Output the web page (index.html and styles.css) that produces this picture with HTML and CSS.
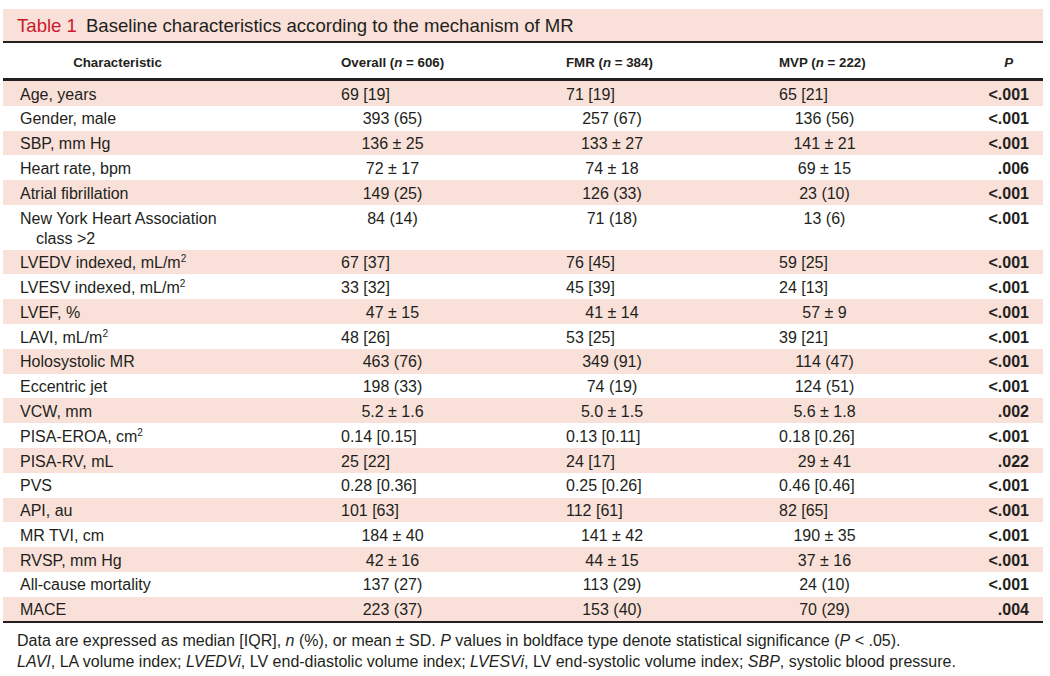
FILE: index.html
```html
<!DOCTYPE html>
<html lang="en">
<head>
<meta charset="utf-8">
<title>Table 1</title>
<link rel="stylesheet" href="styles.css">
</head>
<body>
<div class="page">
  <div class="caption"><span class="label">Table 1</span>Baseline characteristics according to the mechanism of MR</div>
  <div class="thead">
    <div class="h hc">Characteristic</div>
    <div class="h">Overall (<i>n</i> = 606)</div>
    <div class="h">FMR (<i>n</i> = 384)</div>
    <div class="h">MVP (<i>n</i> = 222)</div>
    <div class="h hp"><i>P</i></div>
  </div>
  <div class="tbody">
    <div class="row"><div class="k">Age, years</div><div class="o">69 [19]</div><div class="f">71 [19]</div><div class="m">65 [21]</div><div class="p">&lt;.001</div></div>
    <div class="row"><div class="k">Gender, male</div><div class="o c">393 (65)</div><div class="f c">257 (67)</div><div class="m c">136 (56)</div><div class="p">&lt;.001</div></div>
    <div class="row"><div class="k">SBP, mm Hg</div><div class="o c">136 ± 25</div><div class="f c">133 ± 27</div><div class="m c">141 ± 21</div><div class="p">&lt;.001</div></div>
    <div class="row"><div class="k">Heart rate, bpm</div><div class="o c">72 ± 17</div><div class="f c">74 ± 18</div><div class="m c">69 ± 15</div><div class="p">.006</div></div>
    <div class="row"><div class="k">Atrial fibrillation</div><div class="o c">149 (25)</div><div class="f c">126 (33)</div><div class="m c">23 (10)</div><div class="p">&lt;.001</div></div>
    <div class="row"><div class="k hang">New York Heart Association class &gt;2</div><div class="o c">84 (14)</div><div class="f c">71 (18)</div><div class="m c">13 (6)</div><div class="p">&lt;.001</div></div>
    <div class="row"><div class="k">LVEDV indexed, mL/m<sup>2</sup></div><div class="o">67 [37]</div><div class="f">76 [45]</div><div class="m">59 [25]</div><div class="p">&lt;.001</div></div>
    <div class="row"><div class="k">LVESV indexed, mL/m<sup>2</sup></div><div class="o">33 [32]</div><div class="f">45 [39]</div><div class="m">24 [13]</div><div class="p">&lt;.001</div></div>
    <div class="row"><div class="k">LVEF, %</div><div class="o c">47 ± 15</div><div class="f c">41 ± 14</div><div class="m c">57 ± 9</div><div class="p">&lt;.001</div></div>
    <div class="row"><div class="k">LAVI, mL/m<sup>2</sup></div><div class="o">48 [26]</div><div class="f">53 [25]</div><div class="m">39 [21]</div><div class="p">&lt;.001</div></div>
    <div class="row"><div class="k">Holosystolic MR</div><div class="o c">463 (76)</div><div class="f c">349 (91)</div><div class="m c">114 (47)</div><div class="p">&lt;.001</div></div>
    <div class="row"><div class="k">Eccentric jet</div><div class="o c">198 (33)</div><div class="f c">74 (19)</div><div class="m c">124 (51)</div><div class="p">&lt;.001</div></div>
    <div class="row"><div class="k">VCW, mm</div><div class="o c">5.2 ± 1.6</div><div class="f c">5.0 ± 1.5</div><div class="m c">5.6 ± 1.8</div><div class="p">.002</div></div>
    <div class="row"><div class="k">PISA-EROA, cm<sup>2</sup></div><div class="o">0.14 [0.15]</div><div class="f">0.13 [0.11]</div><div class="m">0.18 [0.26]</div><div class="p">&lt;.001</div></div>
    <div class="row"><div class="k">PISA-RV, mL</div><div class="o">25 [22]</div><div class="f">24 [17]</div><div class="m c">29 ± 41</div><div class="p">.022</div></div>
    <div class="row"><div class="k">PVS</div><div class="o">0.28 [0.36]</div><div class="f">0.25 [0.26]</div><div class="m">0.46 [0.46]</div><div class="p">&lt;.001</div></div>
    <div class="row"><div class="k">API, au</div><div class="o">101 [63]</div><div class="f">112 [61]</div><div class="m">82 [65]</div><div class="p">&lt;.001</div></div>
    <div class="row"><div class="k">MR TVI, cm</div><div class="o c">184 ± 40</div><div class="f c">141 ± 42</div><div class="m c">190 ± 35</div><div class="p">&lt;.001</div></div>
    <div class="row"><div class="k">RVSP, mm Hg</div><div class="o c">42 ± 16</div><div class="f c">44 ± 15</div><div class="m c">37 ± 16</div><div class="p">&lt;.001</div></div>
    <div class="row"><div class="k">All-cause mortality</div><div class="o c">137 (27)</div><div class="f c">113 (29)</div><div class="m c">24 (10)</div><div class="p">&lt;.001</div></div>
    <div class="row"><div class="k">MACE</div><div class="o c">223 (37)</div><div class="f c">153 (40)</div><div class="m c">70 (29)</div><div class="p">.004</div></div>
  </div>
  <div class="notes">
    <p>Data are expressed as median [IQR], <i>n</i> (%), or mean ± SD. <i>P</i> values in boldface type denote statistical significance (<i>P</i> &lt; .05).</p>
    <p><i>LAVI</i>, LA volume index; <i>LVEDVi</i>, LV end-diastolic volume index; <i>LVESVi</i>, LV end-systolic volume index; <i>SBP</i>, systolic blood pressure.</p>
  </div>
</div>
</body>
</html>
```
FILE: styles.css
```css
html, body {
  margin: 0;
  padding: 0;
  background: #ffffff;
}

body {
  font-family: "Liberation Sans", Arial, sans-serif;
  color: #231f20;
}

.page {
  width: 1040px;
  margin-left: 3px;
  padding-top: 9px;
}

.caption {
  background: #f9e1d9;
  height: 32px;
  line-height: 33px;
  font-size: 18.6px;
  padding-left: 14px;
  border-bottom: 2px solid #231f20;
}

.caption .label {
  color: #cc1a2c;
  margin-right: 9px;
}

.thead,
.row {
  display: grid;
  grid-template-columns: 338px 225px 213px 184px 80px;
}

.thead {
  height: 35px;
  align-items: center;
  font-size: 13.3px;
  font-weight: bold;
  border-bottom: 3px solid #231f20;
}

.thead .h {
  padding-top: 3px;
}

.thead .hc {
  text-align: center;
  padding-right: 109px;
}

.thead .hp {
  text-align: right;
  padding-right: 30px;
}

.tbody {
  border-bottom: 2.5px solid #231f20;
}

.row {
  font-size: 16px;
  line-height: 20px;
  padding: 3.6px 0 1.2px;
}

.row:nth-child(odd) {
  background: #f9e1d9;
}

.row .k {
  padding-left: 17px;
}

.row .k.hang {
  padding-left: 33px;
  text-indent: -16px;
  padding-right: 100px;
}

.row sup {
  font-size: 10px;
  line-height: 0;
  vertical-align: 6px;
}

.row .o.c {
  text-align: center;
  padding-right: 122px;
}

.row .f.c {
  text-align: center;
  padding-right: 121px;
}

.row .m.c {
  text-align: center;
  padding-right: 93px;
}

.row .p {
  text-align: right;
  font-weight: bold;
  padding-right: 14px;
}

.notes {
  font-size: 16px;
  line-height: 21px;
  padding-left: 14px;
  padding-top: 7px;
}

.notes p {
  margin: 0;
}
```
